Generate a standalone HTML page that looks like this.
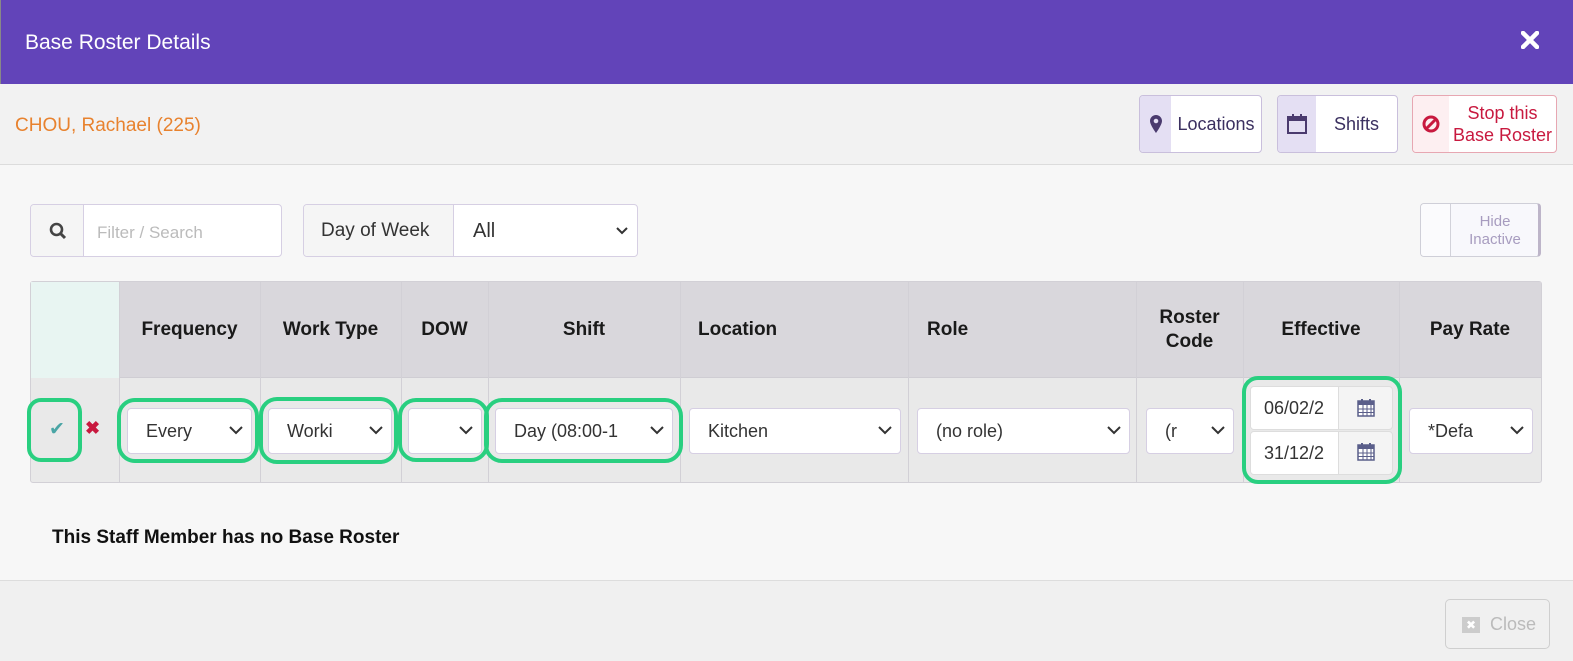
<!DOCTYPE html>
<html><head><meta charset="utf-8"><style>
*{box-sizing:border-box;margin:0;padding:0}
body{width:1573px;height:661px;overflow:hidden;font-family:"Liberation Sans",sans-serif;background:#f7f7f7;position:relative;color:#333}
.a{position:absolute}
.sel{position:absolute;background:#fff;border:1px solid #d6cfe3;border-radius:4px;font-size:18px;color:#333;padding-left:18px;display:flex;align-items:center;overflow:hidden;white-space:nowrap}
.sel svg{position:absolute;right:8px;top:50%;margin-top:-5px}
.g{position:absolute;border:4px solid #29cf80;border-radius:14px}
.th{position:absolute;font-weight:bold;font-size:19px;color:#1a1a1a;text-align:center;display:flex;align-items:center;justify-content:center;line-height:24px}
.vl{position:absolute;top:282px;width:1px;height:200px;background:#d2d0d6}
.btn{position:absolute;background:#fff;border:1px solid #c9bfdc;border-radius:4px;overflow:hidden;display:flex;align-items:center}
.ic{height:100%;display:flex;align-items:center;justify-content:center;background:#e4dff3}
</style></head><body>
<div class="a" style="left:0;top:0;width:1573px;height:84px;background:#6244b9;border-left:1px solid #888"></div>
<div class="a" style="left:25px;top:31px;color:#fff;font-size:21px">Base Roster Details</div>
<svg class="a" style="left:1521px;top:31px" width="18" height="18" viewBox="0 0 18 18"><path d="M2 2L16 16M16 2L2 16" stroke="#fff" stroke-width="4.5" stroke-linecap="round"/></svg>
<div class="a" style="left:0;top:84px;width:1573px;height:81px;background:#f2f2f2;border-bottom:1px solid #dcdcdc"></div>
<div class="a" style="left:15px;top:115px;color:#e8822e;font-size:19px">CHOU, Rachael (225)</div>

<div class="btn" style="left:1139px;top:95px;width:123px;height:58px"><div class="ic" style="width:31px"><svg width="12" height="18" viewBox="0 0 12 18"><path d="M6 0C2.7 0 0 2.6 0 5.9 0 10 6 18 6 18s6-8 6-12.1C12 2.6 9.3 0 6 0zm0 8.3A2.3 2.3 0 1 1 6 3.7a2.3 2.3 0 0 1 0 4.6z" fill="#4a3a6e"/></svg></div><div style="flex:1;text-align:center;font-size:18px;color:#3b3060">Locations</div></div>
<div class="btn" style="left:1277px;top:95px;width:121px;height:58px"><div class="ic" style="width:38px"><svg width="22" height="22" viewBox="0 0 22 22"><rect x="2" y="4" width="18" height="16" fill="none" stroke="#4a3a6e" stroke-width="2"/><rect x="2" y="4" width="18" height="4" fill="#4a3a6e"/><rect x="6" y="1" width="2" height="5" fill="#4a3a6e"/><rect x="14" y="1" width="2" height="5" fill="#4a3a6e"/></svg></div><div style="flex:1;text-align:center;font-size:18px;color:#3b3060">Shifts</div></div>
<div class="btn" style="left:1412px;top:95px;width:145px;height:58px;border-color:#e7a7b2"><div class="ic" style="width:36px;background:#fdeff1"><svg width="18" height="18" viewBox="0 0 18 18"><circle cx="9" cy="9" r="7" fill="none" stroke="#c8193f" stroke-width="3"/><path d="M4 14L14 4" stroke="#c8193f" stroke-width="3"/></svg></div><div style="flex:1;text-align:center;font-size:18px;color:#c8193f;line-height:22px">Stop this<br>Base Roster</div></div>

<div class="a" style="left:30px;top:204px;width:252px;height:53px;border:1px solid #d6cfe3;border-radius:4px;background:#fff;overflow:hidden">
<div class="a" style="left:0;top:0;width:53px;height:51px;background:#f5f5f5;border-right:1px solid #d6cfe3"></div>
<svg class="a" style="left:18px;top:17px" width="18" height="18" viewBox="0 0 18 18"><circle cx="7.5" cy="7.5" r="5.5" fill="none" stroke="#444" stroke-width="2.6"/><path d="M11.5 11.5L16 16" stroke="#444" stroke-width="3"/></svg>
<div class="a" style="left:66px;top:18px;color:#bbb;font-size:17px">Filter / Search</div></div>
<div class="a" style="left:303px;top:204px;width:335px;height:53px;border:1px solid #d6cfe3;border-radius:4px;background:#fff;overflow:hidden">
<div class="a" style="left:0;top:0;width:150px;height:51px;background:#f5f5f5;border-right:1px solid #d6cfe3"></div>
<div class="a" style="left:17px;top:15px;font-size:19px;color:#333">Day of Week</div>
<div class="a" style="left:169px;top:15px;font-size:20px;color:#333">All</div>
<svg class="a" style="left:312px;top:22px" width="12" height="8" viewBox="0 0 12 8"><path d="M1 1l5 5 5-5" fill="none" stroke="#333" stroke-width="2"/></svg></div>
<div class="a" style="left:1420px;top:203px;width:121px;height:54px;border:1px solid #cfcfd8;border-right:3px solid #bdb5c9;border-radius:4px;background:#f8f8fc;overflow:hidden">
<div class="a" style="left:0;top:0;width:30px;height:52px;background:#fbfbfd;border-right:1px solid #d2d2da"></div>
<div class="a" style="left:30px;top:9px;width:88px;text-align:center;font-size:15px;color:#a79cbf;line-height:18px">Hide<br>Inactive</div></div>

<div class="a" style="left:30px;top:281px;width:1512px;height:202px;border:1px solid #d2d0d6;border-radius:3px;background:#e9e9e9"></div>
<div class="a" style="left:31px;top:282px;width:1510px;height:96px;background:#d9d7dc;border-bottom:1px solid #cfcdd3"></div>
<div class="a" style="left:31px;top:282px;width:88px;height:96px;background:#e8f5f2"></div>
<div class="vl" style="left:119px"></div><div class="vl" style="left:260px"></div><div class="vl" style="left:401px"></div><div class="vl" style="left:488px"></div><div class="vl" style="left:680px"></div><div class="vl" style="left:908px"></div><div class="vl" style="left:1136px"></div><div class="vl" style="left:1243px"></div><div class="vl" style="left:1399px"></div>
<div class="th" style="left:119px;top:282px;width:141px;height:96px">Frequency</div>
<div class="th" style="left:260px;top:282px;width:141px;height:96px">Work Type</div>
<div class="th" style="left:401px;top:282px;width:87px;height:96px">DOW</div>
<div class="th" style="left:488px;top:282px;width:192px;height:96px">Shift</div>
<div class="th" style="left:680px;top:282px;width:228px;height:96px;justify-content:flex-start;padding-left:18px">Location</div>
<div class="th" style="left:908px;top:282px;width:228px;height:96px;justify-content:flex-start;padding-left:19px">Role</div>
<div class="th" style="left:1136px;top:282px;width:107px;height:96px">Roster<br>Code</div>
<div class="th" style="left:1243px;top:282px;width:156px;height:96px">Effective</div>
<div class="th" style="left:1399px;top:282px;width:142px;height:96px">Pay Rate</div>

<div class="a" style="left:49px;top:418px;color:#4aa5a5;font-size:19px">✔</div>
<div class="a" style="left:85px;top:418px;color:#c8193f;font-size:18px;font-weight:bold">✖</div>

<div class="sel" style="left:127px;top:408px;width:125px;height:46px">Every<svg width="14" height="9" viewBox="0 0 14 9"><path d="M1 1l6 6 6-6" fill="none" stroke="#333" stroke-width="2"/></svg></div>
<div class="sel" style="left:268px;top:408px;width:124px;height:46px">Worki<svg width="14" height="9" viewBox="0 0 14 9"><path d="M1 1l6 6 6-6" fill="none" stroke="#333" stroke-width="2"/></svg></div>
<div class="sel" style="left:408px;top:408px;width:74px;height:46px"><svg width="14" height="9" viewBox="0 0 14 9"><path d="M1 1l6 6 6-6" fill="none" stroke="#333" stroke-width="2"/></svg></div>
<div class="sel" style="left:495px;top:408px;width:178px;height:46px">Day (08:00-1<svg width="14" height="9" viewBox="0 0 14 9"><path d="M1 1l6 6 6-6" fill="none" stroke="#333" stroke-width="2"/></svg></div>
<div class="sel" style="left:689px;top:408px;width:212px;height:46px">Kitchen<svg width="14" height="9" viewBox="0 0 14 9"><path d="M1 1l6 6 6-6" fill="none" stroke="#333" stroke-width="2"/></svg></div>
<div class="sel" style="left:917px;top:408px;width:213px;height:46px">(no role)<svg width="14" height="9" viewBox="0 0 14 9"><path d="M1 1l6 6 6-6" fill="none" stroke="#333" stroke-width="2"/></svg></div>
<div class="sel" style="left:1146px;top:408px;width:88px;height:46px">(r<svg width="14" height="9" viewBox="0 0 14 9"><path d="M1 1l6 6 6-6" fill="none" stroke="#333" stroke-width="2"/></svg></div>
<div class="sel" style="left:1409px;top:408px;width:124px;height:46px">*Defa<svg width="14" height="9" viewBox="0 0 14 9"><path d="M1 1l6 6 6-6" fill="none" stroke="#333" stroke-width="2"/></svg></div>

<div class="a" style="left:1250px;top:386px;width:143px;height:44px;background:#f4f4f4;border:1px solid #ddd;border-radius:4px;overflow:hidden"><div class="a" style="left:0;top:0;width:88px;height:42px;background:#fff;border-right:1px solid #ddd;font-size:18px;padding:11px 0 0 13px">06/02/2</div><svg class="a" style="left:105px;top:11px" width="20" height="20" viewBox="0 0 20 20"><rect x="2" y="3" width="16" height="15" fill="#fff" stroke="#5a5e8a" stroke-width="1.5"/><rect x="2" y="3" width="16" height="4" fill="#5a5e8a"/><path d="M7 7v11M11 7v11M15 7v11M2 11h16M2 14.5h16" stroke="#5a5e8a" stroke-width="1"/><rect x="5" y="1" width="2" height="4" fill="#5a5e8a"/><rect x="13" y="1" width="2" height="4" fill="#5a5e8a"/></svg></div>
<div class="a" style="left:1250px;top:431px;width:143px;height:44px;background:#f4f4f4;border:1px solid #ddd;border-radius:4px;overflow:hidden"><div class="a" style="left:0;top:0;width:88px;height:42px;background:#fff;border-right:1px solid #ddd;font-size:18px;padding:11px 0 0 13px">31/12/2</div><svg class="a" style="left:105px;top:10px" width="20" height="20" viewBox="0 0 20 20"><rect x="2" y="3" width="16" height="15" fill="#fff" stroke="#5a5e8a" stroke-width="1.5"/><rect x="2" y="3" width="16" height="4" fill="#5a5e8a"/><path d="M7 7v11M11 7v11M15 7v11M2 11h16M2 14.5h16" stroke="#5a5e8a" stroke-width="1"/><rect x="5" y="1" width="2" height="4" fill="#5a5e8a"/><rect x="13" y="1" width="2" height="4" fill="#5a5e8a"/></svg></div>

<div class="g" style="left:27px;top:398px;width:55px;height:64px"></div>
<div class="g" style="left:117px;top:398px;width:142px;height:65px;border-radius:18px"></div>
<div class="g" style="left:259px;top:397px;width:139px;height:67px;border-radius:18px"></div>
<div class="g" style="left:398px;top:398px;width:91px;height:64px;border-radius:18px"></div>
<div class="g" style="left:484px;top:398px;width:199px;height:65px;border-radius:18px"></div>
<div class="g" style="left:1242px;top:376px;width:160px;height:108px;border-radius:16px"></div>

<div class="a" style="left:52px;top:527px;font-weight:bold;font-size:19px;color:#111">This Staff Member has no Base Roster</div>

<div class="a" style="left:0;top:580px;width:1573px;height:81px;background:#f0f0f0;border-top:1px solid #ddd"></div>
<div class="a" style="left:1445px;top:599px;width:105px;height:50px;border:1px solid #cfcfcf;border-radius:5px;color:#bbb;font-size:18px;padding:14px 0 0 16px"><span style="display:inline-block;width:18px;height:16px;background:#ccc;color:#fff;font-size:12px;text-align:center;line-height:16px;margin-right:10px;vertical-align:1px">✖</span>Close</div>
</body></html>
